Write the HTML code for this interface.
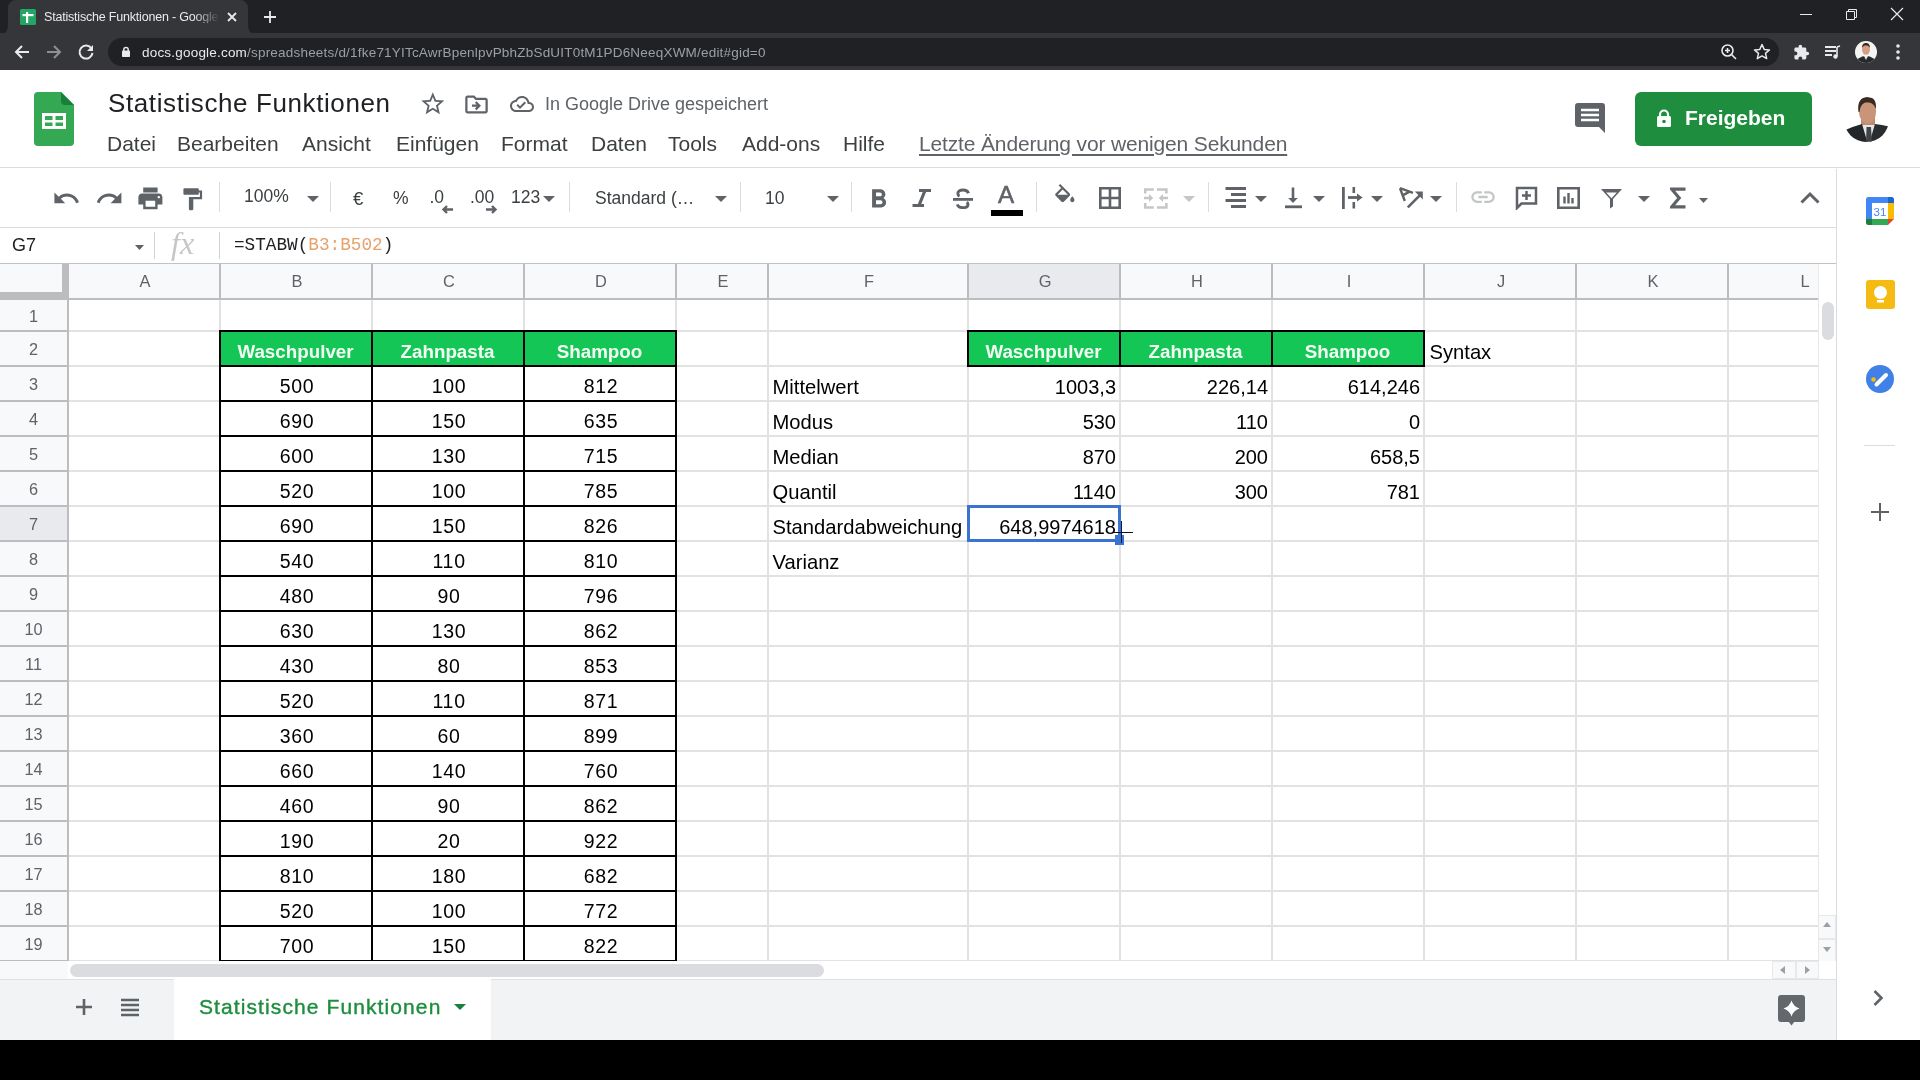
<!DOCTYPE html><html><head><meta charset="utf-8"><style>
html,body{margin:0;padding:0;}body{width:1920px;height:1080px;overflow:hidden;position:relative;background:#fff;font-family:"Liberation Sans",sans-serif;}
div,svg{box-sizing:border-box;}
</style></head><body><div id="root" style="position:absolute;left:0;top:0;width:1920px;height:1080px;overflow:hidden;will-change:transform">
<div style="position:absolute;left:0px;top:0px;width:1920px;height:33px;background:#202124"></div>
<div style="position:absolute;left:8px;top:0px;width:240px;height:34px;background:#35363a;border-radius:8px 8px 0 0"></div>
<svg style="position:absolute;left:0px;top:25px;" width="8" height="9" viewBox="0 0 8 9"><path d="M0 9 Q8 9 8 0 L8 9 Z" fill="#35363a"/></svg>
<svg style="position:absolute;left:248px;top:25px;" width="8" height="9" viewBox="0 0 8 9"><path d="M8 9 Q0 9 0 0 L0 9 Z" fill="#35363a"/></svg>
<svg style="position:absolute;left:20px;top:9px;" width="16" height="16" viewBox="0 0 16 16"><rect x="0" y="0" width="16" height="16" rx="1.5" fill="#23a566"/><rect x="2.5" y="5" width="11" height="2.2" fill="#fff"/><rect x="6" y="3" width="2.2" height="11" fill="#fff"/></svg>
<div style="position:absolute;left:44px;top:10.5px;font-size:12.5px;line-height:12.5px;color:#e8eaed;font-weight:normal;white-space:nowrap;width:176px;letter-spacing:-0.2px;overflow:hidden;-webkit-mask-image:linear-gradient(to right,#000 85%,transparent);">Statistische Funktionen - Google</div>
<svg style="position:absolute;left:226px;top:11px;" width="12" height="12" viewBox="0 0 12 12"><path d="M2 2 L10 10 M10 2 L2 10" stroke="#e8eaed" stroke-width="1.8"/></svg>
<svg style="position:absolute;left:262px;top:9px;" width="16" height="16" viewBox="0 0 16 16"><path d="M8 2 V14 M2 8 H14" stroke="#e8eaed" stroke-width="1.8"/></svg>
<svg style="position:absolute;left:1798px;top:8px;" width="16" height="12" viewBox="0 0 16 12"><path d="M2 6.5 H14" stroke="#e8eaed" stroke-width="1"/></svg>
<svg style="position:absolute;left:1843px;top:6px;" width="16" height="16" viewBox="0 0 16 16"><path d="M3.5 5.5 H11.5 V13.5 H3.5 Z M5.5 5.5 V3.5 H13.5 V11.5 H11.5" stroke="#e8eaed" stroke-width="1" fill="none"/></svg>
<svg style="position:absolute;left:1889px;top:6px;" width="16" height="16" viewBox="0 0 16 16"><path d="M2 2 L14 14 M14 2 L2 14" stroke="#e8eaed" stroke-width="1.2"/></svg>
<div style="position:absolute;left:0px;top:33px;width:1920px;height:37px;background:#35363a"></div>
<svg style="position:absolute;left:12px;top:42px;" width="20" height="20" viewBox="0 0 20 20"><path d="M17 10 H4 M10 4 L4 10 L10 16" stroke="#e8eaed" stroke-width="2" fill="none"/></svg>
<svg style="position:absolute;left:44px;top:42px;" width="20" height="20" viewBox="0 0 20 20"><path d="M3 10 H16 M10 4 L16 10 L10 16" stroke="#8e9093" stroke-width="2" fill="none"/></svg>
<svg style="position:absolute;left:76px;top:42px;" width="20" height="20" viewBox="0 0 20 20"><path d="M15.5 6.5 A6.5 6.5 0 1 0 16.5 11" stroke="#e8eaed" stroke-width="2" fill="none"/><path d="M17 3 V9 H11 Z" fill="#e8eaed"/></svg>
<div style="position:absolute;left:108px;top:38px;width:1671px;height:28px;background:#202124;border-radius:14px"></div>
<svg style="position:absolute;left:121px;top:46px;" width="10" height="11" viewBox="0 0 10 11"><rect x="1" y="4.5" width="8" height="6.5" rx="0.8" fill="#e8eaed"/><path d="M2.8 5 V3.6 A2.2 2.2 0 0 1 7.2 3.6 V5" stroke="#e8eaed" stroke-width="1.5" fill="none"/></svg>
<div style="position:absolute;left:142px;top:45.5px;font-size:13.5px;line-height:13.5px;color:#e8eaed;font-weight:normal;white-space:nowrap;letter-spacing:0.2px;">docs.google.com<span style="color:#9aa0a6">/spreadsheets/d/1fke71YITcAwrBpenlpvPbhZbSdUIT0tM1PD6NeeqXWM/edit#gid=0</span></div>
<svg style="position:absolute;left:1719px;top:42px;" width="20" height="20" viewBox="0 0 20 20"><circle cx="8.5" cy="8.5" r="5.5" stroke="#e8eaed" stroke-width="1.6" fill="none"/><path d="M12.5 12.5 L17 17 M8.5 6 V11 M6 8.5 H11" stroke="#e8eaed" stroke-width="1.6"/></svg>
<svg style="position:absolute;left:1752px;top:42px;" width="20" height="20" viewBox="0 0 20 20"><path d="M10 2.5 L12.2 7.4 L17.5 7.9 L13.5 11.4 L14.7 16.6 L10 13.9 L5.3 16.6 L6.5 11.4 L2.5 7.9 L7.8 7.4 Z" stroke="#e8eaed" stroke-width="1.5" fill="none" stroke-linejoin="round"/></svg>
<svg style="position:absolute;left:1793px;top:44px" width="16.8" height="16.8" viewBox="0 0 24 24"><path d="M20.5 11H19V7c0-1.1-.9-2-2-2h-4V3.5C13 2.12 11.88 1 10.5 1S8 2.120 8 3.5V5H4c-1.1 0-1.99.9-1.99 2v3.8H3.5c1.49 0 2.7 1.21 2.7 2.7s-1.21 2.7-2.7 2.7H2V20c0 1.1.9 2 2 2h3.8v-1.5c0-1.49 1.21-2.7 2.7-2.7 1.49 0 2.7 1.21 2.7 2.7V22H17c1.1 0 2-.9 2-2v-4h1.5c1.38 0 2.5-1.12 2.5-2.5S21.88 11 20.5 11z" fill="#e8eaed"/></svg>
<svg style="position:absolute;left:1823px;top:42px;" width="20" height="20" viewBox="0 0 20 20"><path d="M2 5 H13 M2 9 H13 M2 13 H9" stroke="#e8eaed" stroke-width="1.8"/><path d="M14 5 V14" stroke="#e8eaed" stroke-width="1.6"/><circle cx="12.5" cy="14.5" r="2.2" fill="#e8eaed"/><path d="M14 5 L17 4" stroke="#e8eaed" stroke-width="1.6"/></svg>
<svg style="position:absolute;left:1855px;top:41px;" width="22" height="22" viewBox="0 0 22 22"><defs><clipPath id="av2"><circle cx="11" cy="11" r="11"/></clipPath></defs><g clip-path="url(#av2)"><rect width="22" height="22" fill="#f4f4f4"/><ellipse cx="11" cy="23" rx="10" ry="8" fill="#26292c"/><path d="M9 15 L11 19 L13 15 Z" fill="#e9ecee"/><ellipse cx="11" cy="8.5" rx="4" ry="5.2" fill="#d2a184"/><path d="M7 7 C7 3 9 2 11 2 C13 2 15 3 15 7 C14 5 12.5 4.5 11 4.5 C9.5 4.5 8 5 7 7 Z" fill="#3b2a22"/></g></svg>
<svg style="position:absolute;left:1893px;top:43px;" width="10" height="18" viewBox="0 0 10 18"><circle cx="5" cy="3" r="1.8" fill="#e8eaed"/><circle cx="5" cy="9" r="1.8" fill="#e8eaed"/><circle cx="5" cy="15" r="1.8" fill="#e8eaed"/></svg>
<svg style="position:absolute;left:34px;top:92px;" width="40" height="54" viewBox="0 0 40 54"><path d="M4 0 H27 L40 13 V50 A4 4 0 0 1 36 54 H4 A4 4 0 0 1 0 50 V4 A4 4 0 0 1 4 0 Z" fill="#34a853"/><path d="M27 0 L40 13 H31 A4 4 0 0 1 27 9 Z" fill="#188038"/><path d="M8 21 H32 V37 H8 Z M11 24 V28 H18.5 V24 Z M21.5 24 V28 H29 V24 Z M11 30.5 V34 H18.5 V30.5 Z M21.5 30.5 V34 H29 V30.5 Z" fill="#fff" fill-rule="evenodd"/></svg>
<div style="position:absolute;left:108px;top:90px;font-size:26px;line-height:26px;color:#202124;font-weight:normal;white-space:nowrap;letter-spacing:0.6px;">Statistische Funktionen</div>
<svg style="position:absolute;left:418.7px;top:90.4px" width="27.6" height="27.6" viewBox="0 0 24 24"><path d="M22 9.24l-7.19-.62L12 2 9.19 8.63 2 9.24l5.46 4.73L5.820 21 12 17.27 18.18 21l-1.63-7.03L22 9.24zM12 15.4l-3.76 2.27 1-4.28-3.32-2.88 4.38-.38L12 6.1l1.71 4.04 4.38.38-3.32 2.88 1 4.28L12 15.4z" fill="#5f6368"/></svg>
<svg style="position:absolute;left:463.25px;top:90.8px" width="27" height="27" viewBox="0 0 24 24"><path d="M20 6h-8l-2-2H4c-1.1 0-1.99.9-1.99 2L2 18c0 1.1.9 2 2 2h16c1.1 0 2-.9 2-2V8c0-1.1-.9-2-2-2zm0 12H4V6h5.17l2 2H20v10zm-7.84-6H8v2h4.16l-1.59 1.59L11.99 17 16 13.010 11.99 9l-1.41 1.41L12.160 12z" fill="#5f6368"/></svg>
<svg style="position:absolute;left:510.4px;top:92.4px" width="24" height="24" viewBox="0 0 24 24"><path d="M19.35 10.04C18.670 6.59 15.64 4 12 4 9.11 4 6.6 5.64 5.35 8.04 2.34 8.36 0 10.91 0 14c0 3.31 2.69 6 6 6h13c2.76 0 5-2.24 5-5 0-2.64-2.05-4.78-4.65-4.96zM19 18H6c-2.21 0-4-1.79-4-4 0-2.05 1.53-3.76 3.56-3.97l1.07-.11.5-.95C8.08 7.14 9.94 6 12 6c2.62 0 4.88 1.86 5.39 4.43l.3 1.5 1.53.11c1.56.1 2.78 1.41 2.78 2.96 0 1.65-1.35 3-3 3zm-9-3.82l-2.09-2.09L6.5 13.5 10 17l6.01-6.01-1.41-1.41z" fill="#5f6368"/></svg>
<div style="position:absolute;left:545px;top:95px;font-size:18px;line-height:18px;color:#5f6368;font-weight:normal;white-space:nowrap;">In Google Drive gespeichert</div>
<div style="position:absolute;left:107px;top:133px;font-size:21px;line-height:21px;color:#3c4043;font-weight:normal;white-space:nowrap;">Datei</div>
<div style="position:absolute;left:177px;top:133px;font-size:21px;line-height:21px;color:#3c4043;font-weight:normal;white-space:nowrap;">Bearbeiten</div>
<div style="position:absolute;left:302px;top:133px;font-size:21px;line-height:21px;color:#3c4043;font-weight:normal;white-space:nowrap;">Ansicht</div>
<div style="position:absolute;left:396px;top:133px;font-size:21px;line-height:21px;color:#3c4043;font-weight:normal;white-space:nowrap;">Einfügen</div>
<div style="position:absolute;left:501px;top:133px;font-size:21px;line-height:21px;color:#3c4043;font-weight:normal;white-space:nowrap;">Format</div>
<div style="position:absolute;left:591px;top:133px;font-size:21px;line-height:21px;color:#3c4043;font-weight:normal;white-space:nowrap;">Daten</div>
<div style="position:absolute;left:668px;top:133px;font-size:21px;line-height:21px;color:#3c4043;font-weight:normal;white-space:nowrap;">Tools</div>
<div style="position:absolute;left:742px;top:133px;font-size:21px;line-height:21px;color:#3c4043;font-weight:normal;white-space:nowrap;">Add-ons</div>
<div style="position:absolute;left:843px;top:133px;font-size:21px;line-height:21px;color:#3c4043;font-weight:normal;white-space:nowrap;">Hilfe</div>
<div style="position:absolute;left:919px;top:133px;font-size:21px;line-height:21px;color:#5f6368;font-weight:normal;white-space:nowrap;text-decoration:underline;text-underline-offset:3px;letter-spacing:-0.15px;">Letzte Änderung vor wenigen Sekunden</div>
<svg style="position:absolute;left:1575px;top:103px;" width="30" height="30" viewBox="0 0 30 30"><path d="M3 0 H27 A3 3 0 0 1 30 3 V30 L24 24 H3 A3 3 0 0 1 0 21 V3 A3 3 0 0 1 3 0 Z" fill="#5f6368"/><path d="M6 7 H24 M6 12 H24 M6 17 H24" stroke="#fff" stroke-width="2.6"/></svg>
<div style="position:absolute;left:1635px;top:92px;width:177px;height:54px;background:#1e8e3e;border-radius:6px"></div>
<svg style="position:absolute;left:1655px;top:109px;" width="18" height="18" viewBox="0 0 18 18"><rect x="2" y="7" width="14" height="11" rx="1.5" fill="#fff"/><path d="M5 8 V5.5 A4 4 0 0 1 13 5.5 V8" stroke="#fff" stroke-width="2.2" fill="none"/><circle cx="9" cy="12.5" r="1.8" fill="#1e8e3e"/></svg>
<div style="position:absolute;left:1685px;top:107px;font-size:21px;line-height:21px;color:#fff;font-weight:bold;white-space:nowrap;">Freigeben</div>
<svg style="position:absolute;left:1843px;top:96px;" width="48" height="48" viewBox="0 0 48 48"><defs><clipPath id="av"><circle cx="23.5" cy="23.5" r="22.5"/></clipPath></defs><g clip-path="url(#av)"><rect width="48" height="48" fill="#fff"/><rect x="18" y="18" width="14" height="14" fill="#c08a70"/><rect x="18" y="29" width="14" height="19" fill="#e4e7e9"/><path d="M-2 36 Q8 31 19 28 L25 48 H-2 Z" fill="#232629"/><path d="M48 31 Q40 29 32 28 L26 48 H48 Z" fill="#2a2d30"/><path d="M23.5 31 H28 L29 47 H23 Z" fill="#3e4448"/><ellipse cx="24.5" cy="15.5" rx="8.6" ry="12.2" fill="#c99478"/><path d="M15.5 16 C14 6 18 1 24.5 1 C31 1 33.5 5 33 13 C31 8 28.5 6.5 24 6.5 C20 6.5 17.5 9 16.5 16 Z" fill="#3a2a22"/></g></svg>
<div style="position:absolute;left:0px;top:167px;width:1920px;height:1px;background:#dadce0"></div>
<svg style="position:absolute;left:51.60px;top:184.30px" width="28.80" height="28.80" viewBox="0 0 24 24"><path d="M12.5 8c-2.65 0-5.05.99-6.9 2.6L2 7v9h9l-3.62-3.62c1.39-1.16 3.16-1.88 5.12-1.88 3.54 0 6.55 2.310 7.6 5.5l2.37-.78C21.08 11.03 17.15 8 12.5 8z" fill="#5f6368"/></svg>
<svg style="position:absolute;left:95.00px;top:184.30px" width="28.80" height="28.80" viewBox="0 0 24 24"><path d="M18.4 10.6C16.55 8.99 14.15 8 11.5 8c-4.65 0-8.58 3.03-9.96 7.22L3.9 16c1.05-3.19 4.05-5.5 7.6-5.5 1.95 0 3.73.72 5.12 1.88L13 16h9V7l-3.6 3.6z" fill="#5f6368"/></svg>
<svg style="position:absolute;left:136.00px;top:184.40px" width="28.80" height="28.80" viewBox="0 0 24 24"><path d="M19 8H5c-1.66 0-3 1.34-3 3v6h4v4h12v-4h4v-6c0-1.66-1.34-3-3-3zm-3 11H8v-5h8v5zm3-7c-.55 0-1-.45-1-1s.45-1 1-1 1 .45 1 1-.45 1-1 1zm-1-9H6v4h12V3z" fill="#5f6368"/></svg>
<svg style="position:absolute;left:179.10px;top:185.50px" width="26.40" height="26.40" viewBox="0 0 24 24"><path d="M18 4V3c0-.55-.45-1-1-1H5c-.55 0-1 .45-1 1v4c0 .55.45 1 1 1h12c.55 0 1-.45 1-1V6h1v4H9v11c0 .55.45 1 1 1h2c.55 0 1-.45 1-1v-9h8V4h-3z" fill="#5f6368"/></svg>
<div style="position:absolute;left:219px;top:182px;width:1px;height:30px;background:#dadce0"></div>
<div style="position:absolute;left:244px;top:188px;font-size:17.5px;line-height:17.5px;color:#3c4043;font-weight:normal;white-space:nowrap;">100%</div>
<svg style="position:absolute;left:307.0px;top:195.5px;" width="12" height="6" viewBox="0 0 12 6"><path d="M0 0 H12 L6.0 6 Z" fill="#5f6368"/></svg>
<div style="position:absolute;left:330px;top:182px;width:1px;height:30px;background:#dadce0"></div>
<div style="position:absolute;left:353px;top:189.5px;font-size:18.5px;line-height:18.5px;color:#3c4043;font-weight:normal;white-space:nowrap;">€</div>
<div style="position:absolute;left:393px;top:189.5px;font-size:17.5px;line-height:17.5px;color:#3c4043;font-weight:normal;white-space:nowrap;">%</div>
<div style="position:absolute;left:429.5px;top:188.5px;font-size:17.5px;line-height:17.5px;color:#3c4043;font-weight:normal;white-space:nowrap;">.0</div>
<svg style="position:absolute;left:440px;top:205px;" width="14" height="9" viewBox="0 0 14 9"><path d="M13 4.5 H4 M7 1 L3.5 4.5 L7 8" stroke="#5f6368" stroke-width="2.4" fill="none"/></svg>
<div style="position:absolute;left:470px;top:188.5px;font-size:17.5px;line-height:17.5px;color:#3c4043;font-weight:normal;white-space:nowrap;">.00</div>
<svg style="position:absolute;left:484.5px;top:205px;" width="14" height="9" viewBox="0 0 14 9"><path d="M1 4.5 H10 M7 1 L10.5 4.5 L7 8" stroke="#5f6368" stroke-width="2.4" fill="none"/></svg>
<div style="position:absolute;left:511px;top:188.5px;font-size:17.5px;line-height:17.5px;color:#3c4043;font-weight:normal;white-space:nowrap;">123</div>
<svg style="position:absolute;left:543.0px;top:196.0px;" width="12" height="6" viewBox="0 0 12 6"><path d="M0 0 H12 L6.0 6 Z" fill="#5f6368"/></svg>
<div style="position:absolute;left:569px;top:182px;width:1px;height:30px;background:#dadce0"></div>
<div style="position:absolute;left:595px;top:189.5px;font-size:17.5px;line-height:17.5px;color:#3c4043;font-weight:normal;white-space:nowrap;">Standard (…</div>
<svg style="position:absolute;left:714.5px;top:195.5px;" width="12" height="6" viewBox="0 0 12 6"><path d="M0 0 H12 L6.0 6 Z" fill="#5f6368"/></svg>
<div style="position:absolute;left:740px;top:182px;width:1px;height:30px;background:#dadce0"></div>
<div style="position:absolute;left:765px;top:189.5px;font-size:17.5px;line-height:17.5px;color:#3c4043;font-weight:normal;white-space:nowrap;">10</div>
<svg style="position:absolute;left:827.0px;top:195.5px;" width="12" height="6" viewBox="0 0 12 6"><path d="M0 0 H12 L6.0 6 Z" fill="#5f6368"/></svg>
<div style="position:absolute;left:851px;top:182px;width:1px;height:30px;background:#dadce0"></div>
<svg style="position:absolute;left:862.80px;top:184.05px" width="31.20" height="31.20" viewBox="0 0 24 24"><path d="M15.6 10.79c.97-.67 1.65-1.77 1.65-2.79 0-2.26-1.75-4-4-4H7v14h7.04c2.09 0 3.71-1.7 3.71-3.79 0-1.52-.86-2.82-2.15-3.42zM10 6.5h3c.83 0 1.5.67 1.5 1.5s-.67 1.5-1.5 1.5h-3v-3zm3.5 9H10v-3h3.5c.83 0 1.5.67 1.5 1.5s-.67 1.5-1.5 1.5z" fill="#5f6368"/></svg>
<svg style="position:absolute;left:910px;top:186px;" width="22" height="24" viewBox="0 0 22 24"><path d="M9 4.5 H21 M2.5 19.5 H14 M15 4.5 L9 19.5" stroke="#5f6368" stroke-width="3.2" fill="none"/></svg>
<svg style="position:absolute;left:952px;top:188px;" width="22" height="21" viewBox="0 0 22 21"><path d="M16.5 5.2 C15.8 3.2 13.8 2 11 2 C7.8 2 5.8 3.6 5.8 5.6 C5.8 6.7 6.4 7.6 7.5 8.2" stroke="#5f6368" stroke-width="2.9" fill="none"/><path d="M14.8 14.2 C15.6 14.9 16 15.6 16 16.4 C16 18.4 14 19.6 11 19.6 C8 19.6 5.9 18.4 5.3 16.3" stroke="#5f6368" stroke-width="2.9" fill="none"/><path d="M1 11.4 H21" stroke="#5f6368" stroke-width="2.8"/></svg>
<div style="position:absolute;left:998px;top:182.5px;font-size:24.2px;line-height:24.2px;color:#5f6368;font-weight:normal;white-space:nowrap;-webkit-text-stroke:0.6px #5f6368;">A</div>
<div style="position:absolute;left:991px;top:210px;width:32px;height:6px;background:#000"></div>
<div style="position:absolute;left:1036px;top:182px;width:1px;height:30px;background:#dadce0"></div>
<svg style="position:absolute;left:1052.00px;top:183.50px" width="25.68" height="25.68" viewBox="0 0 24 24"><path d="M16.56 8.94L7.62 0 6.21 1.41l2.38 2.38-5.15 5.15c-.59.59-.59 1.54 0 2.12l5.5 5.5c.29.29.68.44 1.06.44s.77-.15 1.06-.44l5.5-5.5c.59-.58.59-1.53 0-2.12zM5.21 10L10 5.21 14.79 10H5.21zM19 11.5s-2 2.17-2 3.5c0 1.1.9 2 2 2s2-.9 2-2c0-1.33-2-3.5-2-3.5z" fill="#5f6368"/></svg>
<svg style="position:absolute;left:1098px;top:186px;" width="24" height="24" viewBox="0 0 24 24"><path d="M2.3 2.3 H21.7 V21.7 H2.3 Z M12 2.3 V21.7 M2.3 12 H21.7" stroke="#5f6368" stroke-width="2.6" fill="none"/></svg>
<svg style="position:absolute;left:1143px;top:186px;" width="26" height="24" viewBox="0 0 26 24"><path d="M2.2 7.5 V3.4 H10.8 M13.9 3.4 H23.4 V7.5 M2.2 17 V21.5 H10.8 M13.9 21.5 H23.4 V17 M1 12 H8 M25 12 H18" stroke="#c4c7c5" stroke-width="2.5" fill="none"/><path d="M6 8 L10.2 12 L6 16 Z M20 8 L15.8 12 L20 16 Z" fill="#c4c7c5"/></svg>
<svg style="position:absolute;left:1183.0px;top:195.5px;" width="12" height="6" viewBox="0 0 12 6"><path d="M0 0 H12 L6.0 6 Z" fill="#c4c7c5"/></svg>
<div style="position:absolute;left:1208px;top:182px;width:1px;height:30px;background:#dadce0"></div>
<svg style="position:absolute;left:1225px;top:186px;" width="22" height="24" viewBox="0 0 22 24"><path d="M0.5 2.5 H21 M6 8.5 H21 M0.5 14.5 H21 M6 20.5 H21" stroke="#5f6368" stroke-width="2.8"/></svg>
<svg style="position:absolute;left:1254.5px;top:195.5px;" width="12" height="6" viewBox="0 0 12 6"><path d="M0 0 H12 L6.0 6 Z" fill="#5f6368"/></svg>
<svg style="position:absolute;left:1283px;top:186px;" width="20" height="24" viewBox="0 0 20 24"><path d="M10 1.5 V13" stroke="#5f6368" stroke-width="2.6" fill="none"/><path d="M5.2 12 H14.8 L10 17 Z" fill="#5f6368"/><path d="M2 20.8 H19" stroke="#5f6368" stroke-width="2.8"/></svg>
<svg style="position:absolute;left:1313.0px;top:195.5px;" width="12" height="6" viewBox="0 0 12 6"><path d="M0 0 H12 L6.0 6 Z" fill="#5f6368"/></svg>
<svg style="position:absolute;left:1341px;top:186px;" width="24" height="24" viewBox="0 0 24 24"><path d="M2.4 1 V23" stroke="#5f6368" stroke-width="2.8"/><path d="M12.8 1 V7 M12.8 16 V22.5" stroke="#5f6368" stroke-width="2.6"/><path d="M7 11.5 H17.5" stroke="#5f6368" stroke-width="2.8"/><path d="M16 7.5 L21.6 11.5 L16 15.5 Z" fill="#5f6368"/></svg>
<svg style="position:absolute;left:1371.0px;top:195.5px;" width="12" height="6" viewBox="0 0 12 6"><path d="M0 0 H12 L6.0 6 Z" fill="#5f6368"/></svg>
<svg style="position:absolute;left:1399px;top:186px;" width="25" height="24" viewBox="0 0 25 24"><path d="M1 2.2 L14 6.8 M1 2.2 L5.8 15 M3.6 9.4 L10.6 5.6" stroke="#5f6368" stroke-width="2.4" fill="none"/><path d="M8.8 21.4 L20.8 9.4" stroke="#5f6368" stroke-width="2.7" fill="none"/><path d="M23.8 5.6 H15.8 L23.8 13.6 Z" fill="#5f6368"/></svg>
<svg style="position:absolute;left:1430.0px;top:195.5px;" width="12" height="6" viewBox="0 0 12 6"><path d="M0 0 H12 L6.0 6 Z" fill="#5f6368"/></svg>
<div style="position:absolute;left:1456px;top:182px;width:1px;height:30px;background:#dadce0"></div>
<svg style="position:absolute;left:1469.00px;top:183.00px" width="28.08" height="28.08" viewBox="0 0 24 24"><path d="M3.9 12c0-1.71 1.39-3.1 3.1-3.1h4V7H7c-2.76 0-5 2.24-5 5s2.24 5 5 5h4v-1.9H7c-1.71 0-3.1-1.39-3.1-3.1zM8 13h8v-2H8v2zm9-6h-4v1.9h4c1.71 0 3.1 1.39 3.1 3.1s-1.39 3.1-3.1 3.1h-4V17h4c2.76 0 5-2.24 5-5s-2.24-5-5-5z" fill="#c4c7c5"/></svg>
<svg style="position:absolute;left:1515px;top:186px;" width="23" height="24" viewBox="0 0 23 24"><path d="M2 2 H21 V17.5 H6.5 L2 22 Z" stroke="#5f6368" stroke-width="2.5" fill="none" stroke-linejoin="miter"/><path d="M11.5 5 V14 M7 9.5 H16" stroke="#5f6368" stroke-width="2.5"/></svg>
<svg style="position:absolute;left:1556px;top:186px;" width="25" height="24" viewBox="0 0 25 24"><path d="M2.3 2.3 H22.7 V21.7 H2.3 Z" stroke="#5f6368" stroke-width="2.6" fill="none"/><path d="M8.5 10.5 V17.5 M12.5 7 V17.5 M16.5 12 V17.5" stroke="#5f6368" stroke-width="2.4"/></svg>
<svg style="position:absolute;left:1600px;top:188px;" width="23" height="21" viewBox="0 0 23 21"><path d="M1 1 H22 L13 11 V18.5 L10 20.5 V11 Z" fill="#5f6368"/><path d="M6.2 4.6 H16.8 L11.5 10.2 Z" fill="#fff"/></svg>
<svg style="position:absolute;left:1638.0px;top:195.5px;" width="12" height="6" viewBox="0 0 12 6"><path d="M0 0 H12 L6.0 6 Z" fill="#5f6368"/></svg>
<svg style="position:absolute;left:1669.5px;top:186.5px;" width="17" height="22" viewBox="0 0 17 22"><path d="M15.5 2.2 H1.8 L9.2 11 L1.8 19.8 H15.5" stroke="#5f6368" stroke-width="3.2" fill="none" stroke-linejoin="miter"/></svg>
<svg style="position:absolute;left:1699.0px;top:197.5px;" width="9" height="5" viewBox="0 0 9 5"><path d="M0 0 H9 L4.5 5 Z" fill="#5f6368"/></svg>
<svg style="position:absolute;left:1799px;top:189.5px;" width="22" height="16" viewBox="0 0 22 16"><path d="M2.5 12.5 L11 4 L19.5 12.5" stroke="#5f6368" stroke-width="3" fill="none"/></svg>
<div style="position:absolute;left:0px;top:227px;width:1836px;height:1px;background:#dadce0"></div>
<div style="position:absolute;left:1836px;top:169px;width:1px;height:871px;background:#dadce0"></div>
<svg style="position:absolute;left:1866px;top:197px;" width="28" height="28" viewBox="0 0 28 28"><defs><clipPath id="cal"><rect x="0" y="0" width="28" height="28" rx="2.5"/></clipPath></defs><g clip-path="url(#cal)"><rect x="0" y="0" width="22" height="6" fill="#4285f4"/><rect x="22" y="0" width="6" height="6" fill="#1967d2"/><rect x="0" y="6" width="6" height="16" fill="#4285f4"/><rect x="22" y="6" width="6" height="16" fill="#fbbc04"/><rect x="6" y="22" width="16" height="6" fill="#34a853"/><rect x="0" y="22" width="6" height="6" fill="#188038"/><path d="M22 22 H28 L22 28 Z" fill="#ea4335"/><rect x="6" y="6" width="16" height="16" fill="#fff"/></g><text x="14" y="19" font-size="11.5" font-family="Liberation Sans" fill="#4285f4" text-anchor="middle">31</text></svg>
<svg style="position:absolute;left:1866px;top:280px;" width="29" height="29" viewBox="0 0 29 29"><rect x="0" y="0" width="29" height="29" rx="3" fill="#f6bb12"/><circle cx="14.5" cy="12.5" r="6.5" fill="#fff"/><rect x="11" y="20" width="7" height="2.5" fill="#fff"/></svg>
<svg style="position:absolute;left:1866px;top:365px;" width="28" height="28" viewBox="0 0 28 28"><circle cx="14" cy="14" r="14" fill="#4180e6"/><path d="M10.5 19.5 L20 10" stroke="#fff" stroke-width="4" stroke-linecap="round"/><circle cx="7.5" cy="14.5" r="2.3" fill="#fbbc04"/></svg>
<div style="position:absolute;left:1864px;top:445px;width:31px;height:1px;background:#dadce0"></div>
<svg style="position:absolute;left:1870px;top:502px;" width="20" height="20" viewBox="0 0 20 20"><path d="M10 1 V19 M1 10 H19" stroke="#5f6368" stroke-width="2"/></svg>
<svg style="position:absolute;left:1871px;top:988px;" width="14" height="20" viewBox="0 0 14 20"><path d="M3.5 3 L10.5 10 L3.5 17" stroke="#5f6368" stroke-width="2.6" fill="none"/></svg>
<div style="position:absolute;left:12px;top:236px;font-size:18px;line-height:18px;color:#202124;font-weight:normal;white-space:nowrap;">G7</div>
<svg style="position:absolute;left:135px;top:245px;" width="9" height="6" viewBox="0 0 9 6"><path d="M0 0 H9 L4.5 5 Z" fill="#5f6368"/></svg>
<div style="position:absolute;left:153.5px;top:232px;width:1.5px;height:27px;background:#d2d2d2"></div>
<div style="position:absolute;left:171px;top:226.5px;font-size:32px;line-height:32px;color:#c6c6c6;font-weight:normal;white-space:nowrap;font-family:Liberation Serif,serif;"><i>fx</i></div>
<div style="position:absolute;left:218.5px;top:232px;width:1.5px;height:27px;background:#d2d2d2"></div>
<div style="position:absolute;left:234px;top:236.5px;font-size:17.7px;line-height:17.7px;color:#202124;font-weight:normal;white-space:nowrap;font-family:Liberation Mono,monospace;">=STABW(<span style="color:#e5a26a">B3:B502</span>)</div>
<div style="position:absolute;left:0px;top:263px;width:1818px;height:37px;background:#f8f9fa"></div>
<div style="position:absolute;left:969px;top:264px;width:150px;height:34px;background:#e8eaed"></div>
<div style="position:absolute;left:0px;top:300px;width:67px;height:661px;background:#f8f9fa"></div>
<div style="position:absolute;left:0px;top:507px;width:67px;height:33px;background:#e8eaed"></div>
<div style="position:absolute;left:0px;top:263px;width:1836px;height:1px;background:#c2c2c2"></div>
<div style="position:absolute;left:219px;top:300px;width:2px;height:661px;background:#e2e2e2"></div>
<div style="position:absolute;left:371px;top:300px;width:2px;height:661px;background:#e2e2e2"></div>
<div style="position:absolute;left:523px;top:300px;width:2px;height:661px;background:#e2e2e2"></div>
<div style="position:absolute;left:675px;top:300px;width:2px;height:661px;background:#e2e2e2"></div>
<div style="position:absolute;left:767px;top:300px;width:2px;height:661px;background:#e2e2e2"></div>
<div style="position:absolute;left:967px;top:300px;width:2px;height:661px;background:#e2e2e2"></div>
<div style="position:absolute;left:1119px;top:300px;width:2px;height:661px;background:#e2e2e2"></div>
<div style="position:absolute;left:1271px;top:300px;width:2px;height:661px;background:#e2e2e2"></div>
<div style="position:absolute;left:1423px;top:300px;width:2px;height:661px;background:#e2e2e2"></div>
<div style="position:absolute;left:1575px;top:300px;width:2px;height:661px;background:#e2e2e2"></div>
<div style="position:absolute;left:1727px;top:300px;width:2px;height:661px;background:#e2e2e2"></div>
<div style="position:absolute;left:219px;top:264px;width:2px;height:36px;background:#bdbdbf"></div>
<div style="position:absolute;left:371px;top:264px;width:2px;height:36px;background:#bdbdbf"></div>
<div style="position:absolute;left:523px;top:264px;width:2px;height:36px;background:#bdbdbf"></div>
<div style="position:absolute;left:675px;top:264px;width:2px;height:36px;background:#bdbdbf"></div>
<div style="position:absolute;left:767px;top:264px;width:2px;height:36px;background:#bdbdbf"></div>
<div style="position:absolute;left:967px;top:264px;width:2px;height:36px;background:#bdbdbf"></div>
<div style="position:absolute;left:1119px;top:264px;width:2px;height:36px;background:#bdbdbf"></div>
<div style="position:absolute;left:1271px;top:264px;width:2px;height:36px;background:#bdbdbf"></div>
<div style="position:absolute;left:1423px;top:264px;width:2px;height:36px;background:#bdbdbf"></div>
<div style="position:absolute;left:1575px;top:264px;width:2px;height:36px;background:#bdbdbf"></div>
<div style="position:absolute;left:1727px;top:264px;width:2px;height:36px;background:#bdbdbf"></div>
<div style="position:absolute;left:68px;top:330px;width:1750px;height:2px;background:#e2e2e2"></div>
<div style="position:absolute;left:0px;top:330px;width:67px;height:2px;background:#bdbdbf"></div>
<div style="position:absolute;left:68px;top:365px;width:1750px;height:2px;background:#e2e2e2"></div>
<div style="position:absolute;left:0px;top:365px;width:67px;height:2px;background:#bdbdbf"></div>
<div style="position:absolute;left:68px;top:400px;width:1750px;height:2px;background:#e2e2e2"></div>
<div style="position:absolute;left:0px;top:400px;width:67px;height:2px;background:#bdbdbf"></div>
<div style="position:absolute;left:68px;top:435px;width:1750px;height:2px;background:#e2e2e2"></div>
<div style="position:absolute;left:0px;top:435px;width:67px;height:2px;background:#bdbdbf"></div>
<div style="position:absolute;left:68px;top:470px;width:1750px;height:2px;background:#e2e2e2"></div>
<div style="position:absolute;left:0px;top:470px;width:67px;height:2px;background:#bdbdbf"></div>
<div style="position:absolute;left:68px;top:505px;width:1750px;height:2px;background:#e2e2e2"></div>
<div style="position:absolute;left:0px;top:505px;width:67px;height:2px;background:#bdbdbf"></div>
<div style="position:absolute;left:68px;top:540px;width:1750px;height:2px;background:#e2e2e2"></div>
<div style="position:absolute;left:0px;top:540px;width:67px;height:2px;background:#bdbdbf"></div>
<div style="position:absolute;left:68px;top:575px;width:1750px;height:2px;background:#e2e2e2"></div>
<div style="position:absolute;left:0px;top:575px;width:67px;height:2px;background:#bdbdbf"></div>
<div style="position:absolute;left:68px;top:610px;width:1750px;height:2px;background:#e2e2e2"></div>
<div style="position:absolute;left:0px;top:610px;width:67px;height:2px;background:#bdbdbf"></div>
<div style="position:absolute;left:68px;top:645px;width:1750px;height:2px;background:#e2e2e2"></div>
<div style="position:absolute;left:0px;top:645px;width:67px;height:2px;background:#bdbdbf"></div>
<div style="position:absolute;left:68px;top:680px;width:1750px;height:2px;background:#e2e2e2"></div>
<div style="position:absolute;left:0px;top:680px;width:67px;height:2px;background:#bdbdbf"></div>
<div style="position:absolute;left:68px;top:715px;width:1750px;height:2px;background:#e2e2e2"></div>
<div style="position:absolute;left:0px;top:715px;width:67px;height:2px;background:#bdbdbf"></div>
<div style="position:absolute;left:68px;top:750px;width:1750px;height:2px;background:#e2e2e2"></div>
<div style="position:absolute;left:0px;top:750px;width:67px;height:2px;background:#bdbdbf"></div>
<div style="position:absolute;left:68px;top:785px;width:1750px;height:2px;background:#e2e2e2"></div>
<div style="position:absolute;left:0px;top:785px;width:67px;height:2px;background:#bdbdbf"></div>
<div style="position:absolute;left:68px;top:820px;width:1750px;height:2px;background:#e2e2e2"></div>
<div style="position:absolute;left:0px;top:820px;width:67px;height:2px;background:#bdbdbf"></div>
<div style="position:absolute;left:68px;top:855px;width:1750px;height:2px;background:#e2e2e2"></div>
<div style="position:absolute;left:0px;top:855px;width:67px;height:2px;background:#bdbdbf"></div>
<div style="position:absolute;left:68px;top:890px;width:1750px;height:2px;background:#e2e2e2"></div>
<div style="position:absolute;left:0px;top:890px;width:67px;height:2px;background:#bdbdbf"></div>
<div style="position:absolute;left:68px;top:925px;width:1750px;height:2px;background:#e2e2e2"></div>
<div style="position:absolute;left:0px;top:925px;width:67px;height:2px;background:#bdbdbf"></div>
<div style="position:absolute;left:68px;top:960px;width:1750px;height:2px;background:#e2e2e2"></div>
<div style="position:absolute;left:0px;top:960px;width:67px;height:2px;background:#bdbdbf"></div>
<div style="position:absolute;left:67px;top:298px;width:1751px;height:2px;background:#bdbdbf"></div>
<div style="position:absolute;left:67px;top:264px;width:2px;height:698px;background:#bdbdbf"></div>
<div style="position:absolute;left:0px;top:264px;width:62px;height:28px;background:#f8f9fa"></div>
<div style="position:absolute;left:62px;top:264px;width:7px;height:36px;background:#bdbdbf"></div>
<div style="position:absolute;left:0px;top:292px;width:69px;height:8px;background:#bdbdbf"></div>
<div style="position:absolute;left:69px;top:273px;width:152px;text-align:center;font-size:16.4px;line-height:16.4px;color:#5f6368">A</div>
<div style="position:absolute;left:221px;top:273px;width:152px;text-align:center;font-size:16.4px;line-height:16.4px;color:#5f6368">B</div>
<div style="position:absolute;left:373px;top:273px;width:152px;text-align:center;font-size:16.4px;line-height:16.4px;color:#5f6368">C</div>
<div style="position:absolute;left:525px;top:273px;width:152px;text-align:center;font-size:16.4px;line-height:16.4px;color:#5f6368">D</div>
<div style="position:absolute;left:677px;top:273px;width:92px;text-align:center;font-size:16.4px;line-height:16.4px;color:#5f6368">E</div>
<div style="position:absolute;left:769px;top:273px;width:200px;text-align:center;font-size:16.4px;line-height:16.4px;color:#5f6368">F</div>
<div style="position:absolute;left:969px;top:273px;width:152px;text-align:center;font-size:16.4px;line-height:16.4px;color:#5f6368">G</div>
<div style="position:absolute;left:1121px;top:273px;width:152px;text-align:center;font-size:16.4px;line-height:16.4px;color:#5f6368">H</div>
<div style="position:absolute;left:1273px;top:273px;width:152px;text-align:center;font-size:16.4px;line-height:16.4px;color:#5f6368">I</div>
<div style="position:absolute;left:1425px;top:273px;width:152px;text-align:center;font-size:16.4px;line-height:16.4px;color:#5f6368">J</div>
<div style="position:absolute;left:1577px;top:273px;width:152px;text-align:center;font-size:16.4px;line-height:16.4px;color:#5f6368">K</div>
<div style="position:absolute;left:1800.5px;top:273px;font-size:16.4px;line-height:16.4px;color:#5f6368;font-weight:normal;white-space:nowrap;">L</div>
<div style="position:absolute;left:0px;top:308.2px;width:67px;text-align:center;font-size:16.3px;line-height:16.3px;color:#5f6368">1</div>
<div style="position:absolute;left:0px;top:341.2px;width:67px;text-align:center;font-size:16.3px;line-height:16.3px;color:#5f6368">2</div>
<div style="position:absolute;left:0px;top:376.2px;width:67px;text-align:center;font-size:16.3px;line-height:16.3px;color:#5f6368">3</div>
<div style="position:absolute;left:0px;top:411.2px;width:67px;text-align:center;font-size:16.3px;line-height:16.3px;color:#5f6368">4</div>
<div style="position:absolute;left:0px;top:446.2px;width:67px;text-align:center;font-size:16.3px;line-height:16.3px;color:#5f6368">5</div>
<div style="position:absolute;left:0px;top:481.2px;width:67px;text-align:center;font-size:16.3px;line-height:16.3px;color:#5f6368">6</div>
<div style="position:absolute;left:0px;top:516.2px;width:67px;text-align:center;font-size:16.3px;line-height:16.3px;color:#5f6368">7</div>
<div style="position:absolute;left:0px;top:551.2px;width:67px;text-align:center;font-size:16.3px;line-height:16.3px;color:#5f6368">8</div>
<div style="position:absolute;left:0px;top:586.2px;width:67px;text-align:center;font-size:16.3px;line-height:16.3px;color:#5f6368">9</div>
<div style="position:absolute;left:0px;top:621.2px;width:67px;text-align:center;font-size:16.3px;line-height:16.3px;color:#5f6368">10</div>
<div style="position:absolute;left:0px;top:656.2px;width:67px;text-align:center;font-size:16.3px;line-height:16.3px;color:#5f6368">11</div>
<div style="position:absolute;left:0px;top:691.2px;width:67px;text-align:center;font-size:16.3px;line-height:16.3px;color:#5f6368">12</div>
<div style="position:absolute;left:0px;top:726.2px;width:67px;text-align:center;font-size:16.3px;line-height:16.3px;color:#5f6368">13</div>
<div style="position:absolute;left:0px;top:761.2px;width:67px;text-align:center;font-size:16.3px;line-height:16.3px;color:#5f6368">14</div>
<div style="position:absolute;left:0px;top:796.2px;width:67px;text-align:center;font-size:16.3px;line-height:16.3px;color:#5f6368">15</div>
<div style="position:absolute;left:0px;top:831.2px;width:67px;text-align:center;font-size:16.3px;line-height:16.3px;color:#5f6368">16</div>
<div style="position:absolute;left:0px;top:866.2px;width:67px;text-align:center;font-size:16.3px;line-height:16.3px;color:#5f6368">17</div>
<div style="position:absolute;left:0px;top:901.2px;width:67px;text-align:center;font-size:16.3px;line-height:16.3px;color:#5f6368">18</div>
<div style="position:absolute;left:0px;top:936.2px;width:67px;text-align:center;font-size:16.3px;line-height:16.3px;color:#5f6368">19</div>
<div style="position:absolute;left:219px;top:330px;width:152px;height:36px;background:#14c656"></div>
<div style="position:absolute;left:371px;top:330px;width:152px;height:36px;background:#14c656"></div>
<div style="position:absolute;left:523px;top:330px;width:152px;height:36px;background:#14c656"></div>
<div style="position:absolute;left:219px;top:330px;width:154px;height:37px;border:2px solid #000"></div>
<div style="position:absolute;left:219px;top:365px;width:154px;height:37px;border:2px solid #000"></div>
<div style="position:absolute;left:219px;top:400px;width:154px;height:37px;border:2px solid #000"></div>
<div style="position:absolute;left:219px;top:435px;width:154px;height:37px;border:2px solid #000"></div>
<div style="position:absolute;left:219px;top:470px;width:154px;height:37px;border:2px solid #000"></div>
<div style="position:absolute;left:219px;top:505px;width:154px;height:37px;border:2px solid #000"></div>
<div style="position:absolute;left:219px;top:540px;width:154px;height:37px;border:2px solid #000"></div>
<div style="position:absolute;left:219px;top:575px;width:154px;height:37px;border:2px solid #000"></div>
<div style="position:absolute;left:219px;top:610px;width:154px;height:37px;border:2px solid #000"></div>
<div style="position:absolute;left:219px;top:645px;width:154px;height:37px;border:2px solid #000"></div>
<div style="position:absolute;left:219px;top:680px;width:154px;height:37px;border:2px solid #000"></div>
<div style="position:absolute;left:219px;top:715px;width:154px;height:37px;border:2px solid #000"></div>
<div style="position:absolute;left:219px;top:750px;width:154px;height:37px;border:2px solid #000"></div>
<div style="position:absolute;left:219px;top:785px;width:154px;height:37px;border:2px solid #000"></div>
<div style="position:absolute;left:219px;top:820px;width:154px;height:37px;border:2px solid #000"></div>
<div style="position:absolute;left:219px;top:855px;width:154px;height:37px;border:2px solid #000"></div>
<div style="position:absolute;left:219px;top:890px;width:154px;height:37px;border:2px solid #000"></div>
<div style="position:absolute;left:219px;top:925px;width:154px;height:37px;border:2px solid #000"></div>
<div style="position:absolute;left:371px;top:330px;width:154px;height:37px;border:2px solid #000"></div>
<div style="position:absolute;left:371px;top:365px;width:154px;height:37px;border:2px solid #000"></div>
<div style="position:absolute;left:371px;top:400px;width:154px;height:37px;border:2px solid #000"></div>
<div style="position:absolute;left:371px;top:435px;width:154px;height:37px;border:2px solid #000"></div>
<div style="position:absolute;left:371px;top:470px;width:154px;height:37px;border:2px solid #000"></div>
<div style="position:absolute;left:371px;top:505px;width:154px;height:37px;border:2px solid #000"></div>
<div style="position:absolute;left:371px;top:540px;width:154px;height:37px;border:2px solid #000"></div>
<div style="position:absolute;left:371px;top:575px;width:154px;height:37px;border:2px solid #000"></div>
<div style="position:absolute;left:371px;top:610px;width:154px;height:37px;border:2px solid #000"></div>
<div style="position:absolute;left:371px;top:645px;width:154px;height:37px;border:2px solid #000"></div>
<div style="position:absolute;left:371px;top:680px;width:154px;height:37px;border:2px solid #000"></div>
<div style="position:absolute;left:371px;top:715px;width:154px;height:37px;border:2px solid #000"></div>
<div style="position:absolute;left:371px;top:750px;width:154px;height:37px;border:2px solid #000"></div>
<div style="position:absolute;left:371px;top:785px;width:154px;height:37px;border:2px solid #000"></div>
<div style="position:absolute;left:371px;top:820px;width:154px;height:37px;border:2px solid #000"></div>
<div style="position:absolute;left:371px;top:855px;width:154px;height:37px;border:2px solid #000"></div>
<div style="position:absolute;left:371px;top:890px;width:154px;height:37px;border:2px solid #000"></div>
<div style="position:absolute;left:371px;top:925px;width:154px;height:37px;border:2px solid #000"></div>
<div style="position:absolute;left:523px;top:330px;width:154px;height:37px;border:2px solid #000"></div>
<div style="position:absolute;left:523px;top:365px;width:154px;height:37px;border:2px solid #000"></div>
<div style="position:absolute;left:523px;top:400px;width:154px;height:37px;border:2px solid #000"></div>
<div style="position:absolute;left:523px;top:435px;width:154px;height:37px;border:2px solid #000"></div>
<div style="position:absolute;left:523px;top:470px;width:154px;height:37px;border:2px solid #000"></div>
<div style="position:absolute;left:523px;top:505px;width:154px;height:37px;border:2px solid #000"></div>
<div style="position:absolute;left:523px;top:540px;width:154px;height:37px;border:2px solid #000"></div>
<div style="position:absolute;left:523px;top:575px;width:154px;height:37px;border:2px solid #000"></div>
<div style="position:absolute;left:523px;top:610px;width:154px;height:37px;border:2px solid #000"></div>
<div style="position:absolute;left:523px;top:645px;width:154px;height:37px;border:2px solid #000"></div>
<div style="position:absolute;left:523px;top:680px;width:154px;height:37px;border:2px solid #000"></div>
<div style="position:absolute;left:523px;top:715px;width:154px;height:37px;border:2px solid #000"></div>
<div style="position:absolute;left:523px;top:750px;width:154px;height:37px;border:2px solid #000"></div>
<div style="position:absolute;left:523px;top:785px;width:154px;height:37px;border:2px solid #000"></div>
<div style="position:absolute;left:523px;top:820px;width:154px;height:37px;border:2px solid #000"></div>
<div style="position:absolute;left:523px;top:855px;width:154px;height:37px;border:2px solid #000"></div>
<div style="position:absolute;left:523px;top:890px;width:154px;height:37px;border:2px solid #000"></div>
<div style="position:absolute;left:523px;top:925px;width:154px;height:37px;border:2px solid #000"></div>
<div style="position:absolute;left:967px;top:330px;width:152px;height:36px;background:#14c656"></div>
<div style="position:absolute;left:967px;top:330px;width:154px;height:37px;border:2px solid #000"></div>
<div style="position:absolute;left:1119px;top:330px;width:152px;height:36px;background:#14c656"></div>
<div style="position:absolute;left:1119px;top:330px;width:154px;height:37px;border:2px solid #000"></div>
<div style="position:absolute;left:1271px;top:330px;width:152px;height:36px;background:#14c656"></div>
<div style="position:absolute;left:1271px;top:330px;width:154px;height:37px;border:2px solid #000"></div>
<div style="position:absolute;top:342.82px;font-size:18.8px;line-height:18.8px;color:#f4fff4;font-weight:bold;white-space:nowrap;;left:220px;width:151px;text-align:center;">Waschpulver</div>
<div style="position:absolute;top:342.82px;font-size:18.8px;line-height:18.8px;color:#f4fff4;font-weight:bold;white-space:nowrap;;left:372px;width:151px;text-align:center;">Zahnpasta</div>
<div style="position:absolute;top:342.82px;font-size:18.8px;line-height:18.8px;color:#f4fff4;font-weight:bold;white-space:nowrap;;left:524px;width:151px;text-align:center;">Shampoo</div>
<div style="position:absolute;top:342.82px;font-size:18.8px;line-height:18.8px;color:#f4fff4;font-weight:bold;white-space:nowrap;;left:968px;width:151px;text-align:center;">Waschpulver</div>
<div style="position:absolute;top:342.82px;font-size:18.8px;line-height:18.8px;color:#f4fff4;font-weight:bold;white-space:nowrap;;left:1120px;width:151px;text-align:center;">Zahnpasta</div>
<div style="position:absolute;top:342.82px;font-size:18.8px;line-height:18.8px;color:#f4fff4;font-weight:bold;white-space:nowrap;;left:1272px;width:151px;text-align:center;">Shampoo</div>
<div style="position:absolute;top:376.82px;font-size:19.5px;line-height:19.5px;color:#000;font-weight:normal;white-space:nowrap;letter-spacing:0.7px;text-indent:3.2px;;left:220px;width:151px;text-align:center;">500</div>
<div style="position:absolute;top:376.82px;font-size:19.5px;line-height:19.5px;color:#000;font-weight:normal;white-space:nowrap;letter-spacing:0.7px;text-indent:3.2px;;left:372px;width:151px;text-align:center;">100</div>
<div style="position:absolute;top:376.82px;font-size:19.5px;line-height:19.5px;color:#000;font-weight:normal;white-space:nowrap;letter-spacing:0.7px;text-indent:3.2px;;left:524px;width:151px;text-align:center;">812</div>
<div style="position:absolute;top:411.82px;font-size:19.5px;line-height:19.5px;color:#000;font-weight:normal;white-space:nowrap;letter-spacing:0.7px;text-indent:3.2px;;left:220px;width:151px;text-align:center;">690</div>
<div style="position:absolute;top:411.82px;font-size:19.5px;line-height:19.5px;color:#000;font-weight:normal;white-space:nowrap;letter-spacing:0.7px;text-indent:3.2px;;left:372px;width:151px;text-align:center;">150</div>
<div style="position:absolute;top:411.82px;font-size:19.5px;line-height:19.5px;color:#000;font-weight:normal;white-space:nowrap;letter-spacing:0.7px;text-indent:3.2px;;left:524px;width:151px;text-align:center;">635</div>
<div style="position:absolute;top:446.82px;font-size:19.5px;line-height:19.5px;color:#000;font-weight:normal;white-space:nowrap;letter-spacing:0.7px;text-indent:3.2px;;left:220px;width:151px;text-align:center;">600</div>
<div style="position:absolute;top:446.82px;font-size:19.5px;line-height:19.5px;color:#000;font-weight:normal;white-space:nowrap;letter-spacing:0.7px;text-indent:3.2px;;left:372px;width:151px;text-align:center;">130</div>
<div style="position:absolute;top:446.82px;font-size:19.5px;line-height:19.5px;color:#000;font-weight:normal;white-space:nowrap;letter-spacing:0.7px;text-indent:3.2px;;left:524px;width:151px;text-align:center;">715</div>
<div style="position:absolute;top:481.82px;font-size:19.5px;line-height:19.5px;color:#000;font-weight:normal;white-space:nowrap;letter-spacing:0.7px;text-indent:3.2px;;left:220px;width:151px;text-align:center;">520</div>
<div style="position:absolute;top:481.82px;font-size:19.5px;line-height:19.5px;color:#000;font-weight:normal;white-space:nowrap;letter-spacing:0.7px;text-indent:3.2px;;left:372px;width:151px;text-align:center;">100</div>
<div style="position:absolute;top:481.82px;font-size:19.5px;line-height:19.5px;color:#000;font-weight:normal;white-space:nowrap;letter-spacing:0.7px;text-indent:3.2px;;left:524px;width:151px;text-align:center;">785</div>
<div style="position:absolute;top:516.82px;font-size:19.5px;line-height:19.5px;color:#000;font-weight:normal;white-space:nowrap;letter-spacing:0.7px;text-indent:3.2px;;left:220px;width:151px;text-align:center;">690</div>
<div style="position:absolute;top:516.82px;font-size:19.5px;line-height:19.5px;color:#000;font-weight:normal;white-space:nowrap;letter-spacing:0.7px;text-indent:3.2px;;left:372px;width:151px;text-align:center;">150</div>
<div style="position:absolute;top:516.82px;font-size:19.5px;line-height:19.5px;color:#000;font-weight:normal;white-space:nowrap;letter-spacing:0.7px;text-indent:3.2px;;left:524px;width:151px;text-align:center;">826</div>
<div style="position:absolute;top:551.82px;font-size:19.5px;line-height:19.5px;color:#000;font-weight:normal;white-space:nowrap;letter-spacing:0.7px;text-indent:3.2px;;left:220px;width:151px;text-align:center;">540</div>
<div style="position:absolute;top:551.82px;font-size:19.5px;line-height:19.5px;color:#000;font-weight:normal;white-space:nowrap;letter-spacing:0.7px;text-indent:3.2px;;left:372px;width:151px;text-align:center;">110</div>
<div style="position:absolute;top:551.82px;font-size:19.5px;line-height:19.5px;color:#000;font-weight:normal;white-space:nowrap;letter-spacing:0.7px;text-indent:3.2px;;left:524px;width:151px;text-align:center;">810</div>
<div style="position:absolute;top:586.82px;font-size:19.5px;line-height:19.5px;color:#000;font-weight:normal;white-space:nowrap;letter-spacing:0.7px;text-indent:3.2px;;left:220px;width:151px;text-align:center;">480</div>
<div style="position:absolute;top:586.82px;font-size:19.5px;line-height:19.5px;color:#000;font-weight:normal;white-space:nowrap;letter-spacing:0.7px;text-indent:3.2px;;left:372px;width:151px;text-align:center;">90</div>
<div style="position:absolute;top:586.82px;font-size:19.5px;line-height:19.5px;color:#000;font-weight:normal;white-space:nowrap;letter-spacing:0.7px;text-indent:3.2px;;left:524px;width:151px;text-align:center;">796</div>
<div style="position:absolute;top:621.82px;font-size:19.5px;line-height:19.5px;color:#000;font-weight:normal;white-space:nowrap;letter-spacing:0.7px;text-indent:3.2px;;left:220px;width:151px;text-align:center;">630</div>
<div style="position:absolute;top:621.82px;font-size:19.5px;line-height:19.5px;color:#000;font-weight:normal;white-space:nowrap;letter-spacing:0.7px;text-indent:3.2px;;left:372px;width:151px;text-align:center;">130</div>
<div style="position:absolute;top:621.82px;font-size:19.5px;line-height:19.5px;color:#000;font-weight:normal;white-space:nowrap;letter-spacing:0.7px;text-indent:3.2px;;left:524px;width:151px;text-align:center;">862</div>
<div style="position:absolute;top:656.82px;font-size:19.5px;line-height:19.5px;color:#000;font-weight:normal;white-space:nowrap;letter-spacing:0.7px;text-indent:3.2px;;left:220px;width:151px;text-align:center;">430</div>
<div style="position:absolute;top:656.82px;font-size:19.5px;line-height:19.5px;color:#000;font-weight:normal;white-space:nowrap;letter-spacing:0.7px;text-indent:3.2px;;left:372px;width:151px;text-align:center;">80</div>
<div style="position:absolute;top:656.82px;font-size:19.5px;line-height:19.5px;color:#000;font-weight:normal;white-space:nowrap;letter-spacing:0.7px;text-indent:3.2px;;left:524px;width:151px;text-align:center;">853</div>
<div style="position:absolute;top:691.82px;font-size:19.5px;line-height:19.5px;color:#000;font-weight:normal;white-space:nowrap;letter-spacing:0.7px;text-indent:3.2px;;left:220px;width:151px;text-align:center;">520</div>
<div style="position:absolute;top:691.82px;font-size:19.5px;line-height:19.5px;color:#000;font-weight:normal;white-space:nowrap;letter-spacing:0.7px;text-indent:3.2px;;left:372px;width:151px;text-align:center;">110</div>
<div style="position:absolute;top:691.82px;font-size:19.5px;line-height:19.5px;color:#000;font-weight:normal;white-space:nowrap;letter-spacing:0.7px;text-indent:3.2px;;left:524px;width:151px;text-align:center;">871</div>
<div style="position:absolute;top:726.82px;font-size:19.5px;line-height:19.5px;color:#000;font-weight:normal;white-space:nowrap;letter-spacing:0.7px;text-indent:3.2px;;left:220px;width:151px;text-align:center;">360</div>
<div style="position:absolute;top:726.82px;font-size:19.5px;line-height:19.5px;color:#000;font-weight:normal;white-space:nowrap;letter-spacing:0.7px;text-indent:3.2px;;left:372px;width:151px;text-align:center;">60</div>
<div style="position:absolute;top:726.82px;font-size:19.5px;line-height:19.5px;color:#000;font-weight:normal;white-space:nowrap;letter-spacing:0.7px;text-indent:3.2px;;left:524px;width:151px;text-align:center;">899</div>
<div style="position:absolute;top:761.82px;font-size:19.5px;line-height:19.5px;color:#000;font-weight:normal;white-space:nowrap;letter-spacing:0.7px;text-indent:3.2px;;left:220px;width:151px;text-align:center;">660</div>
<div style="position:absolute;top:761.82px;font-size:19.5px;line-height:19.5px;color:#000;font-weight:normal;white-space:nowrap;letter-spacing:0.7px;text-indent:3.2px;;left:372px;width:151px;text-align:center;">140</div>
<div style="position:absolute;top:761.82px;font-size:19.5px;line-height:19.5px;color:#000;font-weight:normal;white-space:nowrap;letter-spacing:0.7px;text-indent:3.2px;;left:524px;width:151px;text-align:center;">760</div>
<div style="position:absolute;top:796.82px;font-size:19.5px;line-height:19.5px;color:#000;font-weight:normal;white-space:nowrap;letter-spacing:0.7px;text-indent:3.2px;;left:220px;width:151px;text-align:center;">460</div>
<div style="position:absolute;top:796.82px;font-size:19.5px;line-height:19.5px;color:#000;font-weight:normal;white-space:nowrap;letter-spacing:0.7px;text-indent:3.2px;;left:372px;width:151px;text-align:center;">90</div>
<div style="position:absolute;top:796.82px;font-size:19.5px;line-height:19.5px;color:#000;font-weight:normal;white-space:nowrap;letter-spacing:0.7px;text-indent:3.2px;;left:524px;width:151px;text-align:center;">862</div>
<div style="position:absolute;top:831.82px;font-size:19.5px;line-height:19.5px;color:#000;font-weight:normal;white-space:nowrap;letter-spacing:0.7px;text-indent:3.2px;;left:220px;width:151px;text-align:center;">190</div>
<div style="position:absolute;top:831.82px;font-size:19.5px;line-height:19.5px;color:#000;font-weight:normal;white-space:nowrap;letter-spacing:0.7px;text-indent:3.2px;;left:372px;width:151px;text-align:center;">20</div>
<div style="position:absolute;top:831.82px;font-size:19.5px;line-height:19.5px;color:#000;font-weight:normal;white-space:nowrap;letter-spacing:0.7px;text-indent:3.2px;;left:524px;width:151px;text-align:center;">922</div>
<div style="position:absolute;top:866.82px;font-size:19.5px;line-height:19.5px;color:#000;font-weight:normal;white-space:nowrap;letter-spacing:0.7px;text-indent:3.2px;;left:220px;width:151px;text-align:center;">810</div>
<div style="position:absolute;top:866.82px;font-size:19.5px;line-height:19.5px;color:#000;font-weight:normal;white-space:nowrap;letter-spacing:0.7px;text-indent:3.2px;;left:372px;width:151px;text-align:center;">180</div>
<div style="position:absolute;top:866.82px;font-size:19.5px;line-height:19.5px;color:#000;font-weight:normal;white-space:nowrap;letter-spacing:0.7px;text-indent:3.2px;;left:524px;width:151px;text-align:center;">682</div>
<div style="position:absolute;top:901.82px;font-size:19.5px;line-height:19.5px;color:#000;font-weight:normal;white-space:nowrap;letter-spacing:0.7px;text-indent:3.2px;;left:220px;width:151px;text-align:center;">520</div>
<div style="position:absolute;top:901.82px;font-size:19.5px;line-height:19.5px;color:#000;font-weight:normal;white-space:nowrap;letter-spacing:0.7px;text-indent:3.2px;;left:372px;width:151px;text-align:center;">100</div>
<div style="position:absolute;top:901.82px;font-size:19.5px;line-height:19.5px;color:#000;font-weight:normal;white-space:nowrap;letter-spacing:0.7px;text-indent:3.2px;;left:524px;width:151px;text-align:center;">772</div>
<div style="position:absolute;top:936.82px;font-size:19.5px;line-height:19.5px;color:#000;font-weight:normal;white-space:nowrap;letter-spacing:0.7px;text-indent:3.2px;;left:220px;width:151px;text-align:center;">700</div>
<div style="position:absolute;top:936.82px;font-size:19.5px;line-height:19.5px;color:#000;font-weight:normal;white-space:nowrap;letter-spacing:0.7px;text-indent:3.2px;;left:372px;width:151px;text-align:center;">150</div>
<div style="position:absolute;top:936.82px;font-size:19.5px;line-height:19.5px;color:#000;font-weight:normal;white-space:nowrap;letter-spacing:0.7px;text-indent:3.2px;;left:524px;width:151px;text-align:center;">822</div>
<div style="position:absolute;top:377.03px;font-size:20.2px;line-height:20.2px;color:#000;font-weight:normal;white-space:nowrap;;left:772.5px;">Mittelwert</div>
<div style="position:absolute;top:412.03px;font-size:20.2px;line-height:20.2px;color:#000;font-weight:normal;white-space:nowrap;;left:772.5px;">Modus</div>
<div style="position:absolute;top:447.03px;font-size:20.2px;line-height:20.2px;color:#000;font-weight:normal;white-space:nowrap;;left:772.5px;">Median</div>
<div style="position:absolute;top:482.03px;font-size:20.2px;line-height:20.2px;color:#000;font-weight:normal;white-space:nowrap;;left:772.5px;">Quantil</div>
<div style="position:absolute;top:517.03px;font-size:20.2px;line-height:20.2px;color:#000;font-weight:normal;white-space:nowrap;;left:772.5px;">Standardabweichung</div>
<div style="position:absolute;top:552.03px;font-size:20.2px;line-height:20.2px;color:#000;font-weight:normal;white-space:nowrap;;left:772.5px;">Varianz</div>
<div style="position:absolute;top:376.90px;font-size:20.0px;line-height:20.0px;color:#000;font-weight:normal;white-space:nowrap;;left:968px;width:148px;text-align:right;">1003,3</div>
<div style="position:absolute;top:376.90px;font-size:20.0px;line-height:20.0px;color:#000;font-weight:normal;white-space:nowrap;;left:1120px;width:148px;text-align:right;">226,14</div>
<div style="position:absolute;top:376.90px;font-size:20.0px;line-height:20.0px;color:#000;font-weight:normal;white-space:nowrap;;left:1272px;width:148px;text-align:right;">614,246</div>
<div style="position:absolute;top:411.90px;font-size:20.0px;line-height:20.0px;color:#000;font-weight:normal;white-space:nowrap;;left:968px;width:148px;text-align:right;">530</div>
<div style="position:absolute;top:411.90px;font-size:20.0px;line-height:20.0px;color:#000;font-weight:normal;white-space:nowrap;;left:1120px;width:148px;text-align:right;">110</div>
<div style="position:absolute;top:411.90px;font-size:20.0px;line-height:20.0px;color:#000;font-weight:normal;white-space:nowrap;;left:1272px;width:148px;text-align:right;">0</div>
<div style="position:absolute;top:446.90px;font-size:20.0px;line-height:20.0px;color:#000;font-weight:normal;white-space:nowrap;;left:968px;width:148px;text-align:right;">870</div>
<div style="position:absolute;top:446.90px;font-size:20.0px;line-height:20.0px;color:#000;font-weight:normal;white-space:nowrap;;left:1120px;width:148px;text-align:right;">200</div>
<div style="position:absolute;top:446.90px;font-size:20.0px;line-height:20.0px;color:#000;font-weight:normal;white-space:nowrap;;left:1272px;width:148px;text-align:right;">658,5</div>
<div style="position:absolute;top:481.90px;font-size:20.0px;line-height:20.0px;color:#000;font-weight:normal;white-space:nowrap;;left:968px;width:148px;text-align:right;">1140</div>
<div style="position:absolute;top:481.90px;font-size:20.0px;line-height:20.0px;color:#000;font-weight:normal;white-space:nowrap;;left:1120px;width:148px;text-align:right;">300</div>
<div style="position:absolute;top:481.90px;font-size:20.0px;line-height:20.0px;color:#000;font-weight:normal;white-space:nowrap;;left:1272px;width:148px;text-align:right;">781</div>
<div style="position:absolute;top:516.90px;font-size:20.0px;line-height:20.0px;color:#000;font-weight:normal;white-space:nowrap;;left:968px;width:148px;text-align:right;">648,9974618</div>
<div style="position:absolute;top:342.03px;font-size:20.2px;line-height:20.2px;color:#000;font-weight:normal;white-space:nowrap;;left:1429.5px;">Syntax</div>
<div style="position:absolute;left:967px;top:505px;width:154px;height:37px;border:3px solid #3b73d1"></div>
<div style="position:absolute;left:1115px;top:535px;width:9px;height:10px;background:#3b73d1"></div>
<div style="position:absolute;left:1113px;top:532px;width:20px;height:1px;background:#111"></div>
<div style="position:absolute;left:1121px;top:521px;width:1.3px;height:22px;background:#0a1a40"></div>
<div style="position:absolute;left:1818px;top:264px;width:18px;height:697px;background:#fff;border-left:1px solid #e8e8e8"></div>
<div style="position:absolute;left:1822px;top:302px;width:12px;height:38px;background:#dadce0;border-radius:6px"></div>
<div style="position:absolute;left:1818px;top:915px;width:18px;height:24px;background:#f8f9fa;border:1px solid #e8e8e8"></div>
<div style="position:absolute;left:1818px;top:939px;width:18px;height:23px;background:#f8f9fa;border:1px solid #e8e8e8"></div>
<svg style="position:absolute;left:1823px;top:922px;" width="8" height="6" viewBox="0 0 8 6"><path d="M0 5 L4 0 L8 5 Z" fill="#9aa0a6"/></svg>
<svg style="position:absolute;left:1823px;top:947px;" width="8" height="6" viewBox="0 0 8 6"><path d="M0 0 L4 5 L8 0 Z" fill="#9aa0a6"/></svg>
<div style="position:absolute;left:68px;top:961px;width:1768px;height:18px;background:#fff"></div>
<div style="position:absolute;left:0px;top:961px;width:68px;height:18px;background:#f8f9fa"></div>
<div style="position:absolute;left:70px;top:964px;width:754px;height:13px;background:#dadce0;border-radius:7px"></div>
<div style="position:absolute;left:1772px;top:961px;width:24px;height:18px;background:#f8f9fa;border:1px solid #e8e8e8"></div>
<div style="position:absolute;left:1796px;top:961px;width:23px;height:18px;background:#f8f9fa;border:1px solid #e8e8e8"></div>
<svg style="position:absolute;left:1780px;top:966px;" width="6" height="8" viewBox="0 0 6 8"><path d="M5 0 L0 4 L5 8 Z" fill="#9aa0a6"/></svg>
<svg style="position:absolute;left:1805px;top:966px;" width="6" height="8" viewBox="0 0 6 8"><path d="M0 0 L5 4 L0 8 Z" fill="#9aa0a6"/></svg>
<div style="position:absolute;left:0px;top:979px;width:1836px;height:61px;background:#f1f3f4;border-top:1px solid #e0e0e0"></div>
<svg style="position:absolute;left:74px;top:997px;" width="20" height="20" viewBox="0 0 20 20"><path d="M10 2 V18 M2 10 H18" stroke="#5f6368" stroke-width="2.6"/></svg>
<svg style="position:absolute;left:120px;top:997px;" width="20" height="20" viewBox="0 0 20 20"><path d="M1 3 H19 M1 8 H19 M1 13 H19 M1 18 H19" stroke="#5f6368" stroke-width="2.4"/></svg>
<div style="position:absolute;left:174px;top:979px;width:317px;height:61px;background:#fff"></div>
<div style="position:absolute;left:199px;top:996px;font-size:21px;line-height:21px;color:#1e8e3e;font-weight:normal;white-space:nowrap;letter-spacing:1.1px;-webkit-text-stroke:0.4px #1e8e3e;">Statistische Funktionen</div>
<svg style="position:absolute;left:454px;top:1004px;" width="12" height="7" viewBox="0 0 12 7"><path d="M0 0 H12 L6 6 Z" fill="#188038"/></svg>
<svg style="position:absolute;left:1778px;top:995px;" width="27" height="31" viewBox="0 0 27 31"><rect x="0" y="0" width="27" height="27" rx="3" fill="#64676b"/><path d="M10.5 26.5 L13.5 30.5 L16.5 26.5 Z" fill="#64676b"/><path d="M13.5 5.5 Q15.4 11.6 21.5 13.5 Q15.4 15.4 13.5 21.5 Q11.6 15.4 5.5 13.5 Q11.6 11.6 13.5 5.5 Z" fill="#fff"/></svg>
<div style="position:absolute;left:0px;top:1040px;width:1920px;height:40px;background:#000"></div>
</div></body></html>
